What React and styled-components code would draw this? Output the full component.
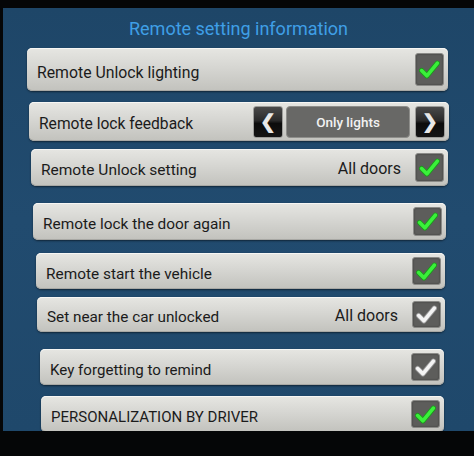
import React from 'react'
import styled, { createGlobalStyle } from 'styled-components'

const GlobalStyle = createGlobalStyle`
  html, body {
    margin: 0;
    padding: 0;
    background: #050607;
  }
  body {
    font-family: Roboto, "Noto Sans", "Liberation Sans", sans-serif;
  }
`

// rows lean a bit to the right going down (the photo is taken at an angle)
const rows = [
  { label: 'Remote Unlock lighting', left: 24, right: 26, top: 9, h: 43, size: 15.8, check: 'green' },
  { label: 'Remote lock feedback', left: 26, right: 25, top: 11, h: 39, size: 15.6, stepper: 'Only lights' },
  { label: 'Remote Unlock setting', left: 28, right: 26, top: 8, h: 37, size: 15.5, value: 'All doors', check: 'green' },
  { label: 'Remote lock the door again', left: 30, right: 28, top: 17, h: 37, size: 15.4, check: 'green' },
  { label: 'Remote start the vehicle', left: 33, right: 29, top: 13, h: 36, size: 15.4, check: 'green' },
  { label: 'Set near the car unlocked', left: 34, right: 29, top: 8, h: 35, size: 15.3, value: 'All doors', check: 'white' },
  { label: 'Key forgetting to remind', left: 37, right: 30, top: 17, h: 36, size: 15.1, check: 'white' },
  { label: 'PERSONALIZATION BY DRIVER', left: 38, right: 30, top: 11, h: 36, size: 15, check: 'green' },
]

const Check = ({ color }) => (
  <CheckBox>
    <svg width="21" height="19" viewBox="0 0 20 18">
      <path
        d="M2.5 10 L7.5 15 L17.5 3"
        fill="none"
        stroke={color === 'green' ? '#1c9a1c' : '#9a9a9a'}
        strokeWidth="5"
        strokeLinecap="round"
        strokeLinejoin="round"
      />
      <path
        d="M2.5 10 L7.5 15 L17.5 3"
        fill="none"
        stroke={color === 'green' ? '#3af03a' : '#f4f4f4'}
        strokeWidth="3.4"
        strokeLinecap="round"
        strokeLinejoin="round"
      />
    </svg>
  </CheckBox>
)

const Stepper = ({ value }) => (
  <StepperWrap>
    <ArrowBtn>❮</ArrowBtn>
    <StepValue>{value}</StepValue>
    <ArrowBtn $right>❯</ArrowBtn>
  </StepperWrap>
)

const App = () => {
  return (
    <>
      <GlobalStyle />
      <Frame>
        <Screen>
          <Title>Remote setting information</Title>
          <List>
            {rows.map((r) => (
              <Row key={r.label} $left={r.left} $right={r.right} $top={r.top} $h={r.h}>
                <Label $size={r.size}>{r.label}</Label>
                {r.value && <Value>{r.value}</Value>}
                {r.stepper && <Stepper value={r.stepper} />}
                {r.check && <Check color={r.check} />}
              </Row>
            ))}
          </List>
        </Screen>
      </Frame>
    </>
  )
}

export default App

const Frame = styled.div`
  width: 474px;
  height: 456px;
  background: #050607;
  padding: 8px 0 0 3px;
  box-sizing: border-box;
  overflow: hidden;
`

const Screen = styled.div`
  height: 423px;
  background: linear-gradient(180deg, #1e4668 0%, #214b6f 50%, #1f486b 100%);
  overflow: hidden;
  display: flex;
  flex-direction: column;
`

const Title = styled.h1`
  margin: 0;
  padding-top: 10px;
  height: 31px;
  box-sizing: border-box;
  text-align: center;
  font-size: 18px;
  font-weight: 400;
  color: #3f9fe6;
`

const List = styled.div`
  display: flex;
  flex-direction: column;
`

const Row = styled.div`
  display: flex;
  align-items: center;
  margin: ${(p) => p.$top}px ${(p) => p.$right}px 0 ${(p) => p.$left}px;
  height: ${(p) => p.$h}px;
  flex-shrink: 0;
  padding: 0 4px 0 10px;
  box-sizing: border-box;
  border-radius: 5px;
  background: linear-gradient(180deg, #e6e6e2 0%, #d6d6d2 45%, #c2c2bd 100%);
  box-shadow: inset 0 1px 0 #f6f6f4, inset 0 -1px 0 #a8a8a4, 0 1px 2px rgba(0, 0, 0, 0.5);
`

const Label = styled.span`
  flex: 1;
  padding-top: 5px;
  font-size: ${(p) => p.$size}px;
  color: #1b1b1b;
  white-space: nowrap;
`

const Value = styled.span`
  padding-top: 2px;
  margin-right: 14px;
  font-size: 16px;
  color: #1b1b1b;
`

const CheckBox = styled.div`
  width: 29px;
  height: calc(100% - 8px);
  max-height: 33px;
  border-radius: 3px;
  background: #5d5d5b;
  border: 1px solid #8b8b88;
  box-shadow: inset 0 0 2px rgba(0, 0, 0, 0.4);
  display: flex;
  align-items: center;
  justify-content: center;
  box-sizing: border-box;
`

const StepperWrap = styled.div`
  display: flex;
  align-items: stretch;
  height: 32px;
  gap: 3px;
`

const ArrowBtn = styled.div`
  width: 30px;
  margin-left: ${(p) => (p.$right ? '2px' : '0')};
  border-radius: 3px;
  background: linear-gradient(180deg, #4a4a4a 0%, #2a2a2a 45%, #0c0c0c 55%, #141414 100%);
  border: 1px solid #9d9d9a;
  box-sizing: border-box;
  color: #e8e8e8;
  font-size: 19px;
  font-weight: 700;
  display: flex;
  align-items: center;
  justify-content: center;
`

const StepValue = styled.div`
  width: 124px;
  border-radius: 4px;
  background: #686866;
  border: 1px solid #8e8e8b;
  box-sizing: border-box;
  color: #f2f2f2;
  font-size: 13.5px;
  font-weight: 500;
  display: flex;
  align-items: center;
  justify-content: center;
`
